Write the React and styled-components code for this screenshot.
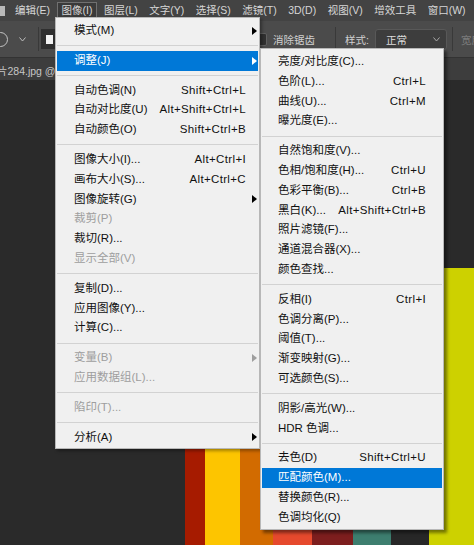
import React from 'react';
import styled, { createGlobalStyle } from 'styled-components';

const GlobalStyle = createGlobalStyle`
  html, body { margin: 0; padding: 0; background: #2a2a2a; }
  body { font-family: "Liberation Sans", "Noto Sans CJK SC", sans-serif; }
  * { box-sizing: border-box; }
`;

const Screen = styled.div`
  position: relative;
  width: 474px;
  height: 545px;
  overflow: hidden;
  display: flex;
  flex-direction: column;
  background: #2a2a2a;
`;

/* ---------- menu bar ---------- */
const MenuBar = styled.div`
  flex: none;
  height: 21px;
  display: flex;
  align-items: center;
  gap: 1.5px;
  background: #434343;
  font-size: 10.5px;
  color: #d6d6d6;
  white-space: nowrap;
`;

const AppLogo = styled.div`
  flex: none;
  width: 5px;
  height: 10px;
  margin-right: 3.5px;
  background: #b9b9b9;
`;

const BarItem = styled.div`
  flex: none;
  height: 17px;
  line-height: 15px;
  padding: 0 4px;
  border: 1px solid ${p => (p.$active ? '#707070' : 'transparent')};
  background: ${p => (p.$active ? '#3a3a3a' : 'transparent')};
`;

/* ---------- options bar ---------- */
const OptionsBar = styled.div`
  flex: none;
  height: 36px;
  display: flex;
  align-items: center;
  background: #4b4b4b;
  font-size: 10.5px;
  color: #cfcfcf;
  white-space: nowrap;
`;

const CircleTool = styled.div`
  flex: none;
  width: 15px;
  height: 15px;
  margin-left: -7px;
  border: 1.5px solid #c4c4c4;
  border-radius: 50%;
`;

const Chevron = styled.svg`
  flex: none;
  margin-left: ${p => p.$ml || 0}px;
`;

const Divider = styled.div`
  flex: none;
  width: 1px;
  height: 24px;
  margin-left: ${p => p.$ml}px;
  background: #393939;
`;

const Swatch = styled.div`
  flex: none;
  width: 16px;
  height: 20px;
  margin-left: 2px;
  background: #2f2f2f;
  display: flex;
  align-items: center;
  justify-content: center;
  &::after {
    content: '';
    width: 7px;
    height: 9px;
    background: #f2f2f2;
  }
`;

const CheckBox = styled.div`
  flex: none;
  width: 12px;
  height: 13px;
  margin-left: 198px;
  background: #303030;
  border: 1px solid #5f5f5f;
  border-radius: 2px;
`;

const OptLabel = styled.span`
  flex: none;
  margin-left: ${p => p.$ml}px;
  color: ${p => (p.$dim ? '#7c7c7c' : '#d0d0d0')};
`;

const Select = styled.div`
  flex: none;
  width: 72px;
  height: 21px;
  margin-left: 6px;
  padding: 0 6px 0 10px;
  display: flex;
  align-items: center;
  justify-content: space-between;
  background: #3d3d3d;
  border: 1px solid #585858;
  border-radius: 3px;
  color: #dcdcdc;
`;

/* ---------- document tab bar ---------- */
const TabBar = styled.div`
  flex: none;
  height: 23px;
  display: flex;
  align-items: center;
  background: #3d3d3d;
  border-top: 1px solid #333;
  font-size: 10.5px;
  color: #c6c6c6;
  white-space: nowrap;
  overflow: hidden;
`;

const TabLabel = styled.span`
  margin-left: -13.5px;
  padding-top: 2px;
`;

/* ---------- canvas ---------- */
const Canvas = styled.div`
  flex: 1;
  display: flex;
  padding: 188px 0 0 185px;
  background: #2a2a2a;
`;

const Photo = styled.div`
  flex: 1;
  display: flex;
`;

const Stripe = styled.div`
  flex: ${p => (p.$w ? `0 0 ${p.$w}px` : '1')};
  background: ${p => p.$c};
`;

/* ---------- menus ---------- */
const Menu = styled.div`
  position: absolute;
  top: ${p => p.$top}px;
  left: ${p => p.$left}px;
  width: ${p => p.$width}px;
  padding: 3px 1px 1px;
  background: #f0f0f0;
  border: 1px solid #b8b8b8;
  box-shadow: ${p => p.$shadow};
  font-size: 11.5px;
  color: #111;
  white-space: nowrap;
`;

const Row = styled.div`
  height: 19.8px;
  line-height: 19.8px;
  display: flex;
  align-items: center;
  padding-left: ${p => p.$pl}px;
  background: ${p => (p.$active ? '#0078d7' : 'transparent')};
  color: ${p => (p.$active ? '#ffffff' : p.$disabled ? '#9e9e9e' : '#111111')};
`;

const Label = styled.span`
  flex: 1;
`;

const Shortcut = styled.span`
  flex: none;
  letter-spacing: 0.35px;
`;

const TrailSlot = styled.span`
  flex: none;
  width: ${p => p.$w}px;
  height: 100%;
  display: flex;
  align-items: center;
  justify-content: flex-end;
  padding-right: 1px;
`;

const Separator = styled.div`
  height: 10px;
  display: flex;
  align-items: center;
  &::after {
    content: '';
    flex: 1;
    height: 1px;
    background: #d2d2d2;
  }
`;

const Arrow = ({ color }) => (
  <svg width="5" height="8" viewBox="0 0 5 8">
    <polygon points="0,0 5,4 0,8" fill={color} />
  </svg>
);

const mainItems = [
  { t: '模式(M)', arrow: true },
  'sep',
  { t: '调整(J)', arrow: true, active: true },
  'sep',
  { t: '自动色调(N)', k: 'Shift+Ctrl+L' },
  { t: '自动对比度(U)', k: 'Alt+Shift+Ctrl+L' },
  { t: '自动颜色(O)', k: 'Shift+Ctrl+B' },
  'sep',
  { t: '图像大小(I)...', k: 'Alt+Ctrl+I' },
  { t: '画布大小(S)...', k: 'Alt+Ctrl+C' },
  { t: '图像旋转(G)', arrow: true },
  { t: '裁剪(P)', dis: true },
  { t: '裁切(R)...' },
  { t: '显示全部(V)', dis: true },
  'sep',
  { t: '复制(D)...' },
  { t: '应用图像(Y)...' },
  { t: '计算(C)...' },
  'sep',
  { t: '变量(B)', dis: true, arrow: true },
  { t: '应用数据组(L)...', dis: true },
  'sep',
  { t: '陷印(T)...', dis: true },
  'sep',
  { t: '分析(A)', arrow: true },
];

const subItems = [
  { t: '亮度/对比度(C)...' },
  { t: '色阶(L)...', k: 'Ctrl+L' },
  { t: '曲线(U)...', k: 'Ctrl+M' },
  { t: '曝光度(E)...' },
  'sep',
  { t: '自然饱和度(V)...' },
  { t: '色相/饱和度(H)...', k: 'Ctrl+U' },
  { t: '色彩平衡(B)...', k: 'Ctrl+B' },
  { t: '黑白(K)...', k: 'Alt+Shift+Ctrl+B' },
  { t: '照片滤镜(F)...' },
  { t: '通道混合器(X)...' },
  { t: '颜色查找...' },
  'sep',
  { t: '反相(I)', k: 'Ctrl+I' },
  { t: '色调分离(P)...' },
  { t: '阈值(T)...' },
  { t: '渐变映射(G)...' },
  { t: '可选颜色(S)...' },
  'sep',
  { t: '阴影/高光(W)...' },
  { t: 'HDR 色调...' },
  'sep',
  { t: '去色(D)', k: 'Shift+Ctrl+U' },
  { t: '匹配颜色(M)...', active: true },
  { t: '替换颜色(R)...' },
  { t: '色调均化(Q)' },
];

const MenuList = ({ items, pl, trail }) =>
  items.map((it, i) =>
    it === 'sep' ? (
      <Separator key={i} />
    ) : (
      <Row key={i} $pl={pl} $active={it.active} $disabled={it.dis}>
        <Label>{it.t}</Label>
        {it.k && <Shortcut>{it.k}</Shortcut>}
        <TrailSlot $w={trail}>
          {it.arrow && (
            <Arrow color={it.active ? '#ffffff' : it.dis ? '#9e9e9e' : '#000000'} />
          )}
        </TrailSlot>
      </Row>
    )
  );

const barItems = ['编辑(E)', '图像(I)', '图层(L)', '文字(Y)', '选择(S)', '滤镜(T)', '3D(D)', '视图(V)', '增效工具', '窗口(W)'];

const stripes = [
  { w: 20, c: '#a61b00' },
  { w: 35, c: '#fdc500' },
  { w: 33, c: '#d26b00' },
  { w: 39, c: '#e6492d' },
  { w: 41, c: '#7d1e1e' },
  { w: 38, c: '#3d7e6f' },
  { w: 38, c: '#272727' },
  { c: '#cdd100' },
];

export default function App() {
  return (
    <>
      <GlobalStyle />
      <Screen>
        <MenuBar>
          <AppLogo />
          {barItems.map(b => (
            <BarItem key={b} $active={b === '图像(I)'}>{b}</BarItem>
          ))}
        </MenuBar>

        <OptionsBar>
          <CircleTool />
          <Chevron $ml={11} width="7" height="5" viewBox="0 0 7 5">
            <polyline points="0.5,0.5 3.5,4 6.5,0.5" fill="none" stroke="#bdbdbd" strokeWidth="1" />
          </Chevron>
          <Divider $ml={12} />
          <Swatch />
          <CheckBox />
          <OptLabel $ml={6}>消除锯齿</OptLabel>
          <Divider $ml={20} />
          <OptLabel $ml={9}>样式:</OptLabel>
          <Select>
            <span>正常</span>
            <svg width="7" height="5" viewBox="0 0 7 5">
              <polyline points="0.5,0.5 3.5,4 6.5,0.5" fill="none" stroke="#a8a8a8" strokeWidth="1" />
            </svg>
          </Select>
          <Divider $ml={5} />
          <OptLabel $ml={8} $dim>宽度:</OptLabel>
        </OptionsBar>

        <TabBar>
          <TabLabel>图片284.jpg @ 100%(RGB/8#)</TabLabel>
        </TabBar>

        <Canvas>
          <Photo>
            {stripes.map((s, i) => (
              <Stripe key={i} $w={s.w} $c={s.c} />
            ))}
          </Photo>
        </Canvas>

        <Menu $top={17} $left={55} $width={205} $shadow="2px 2px 3px rgba(0,0,0,0.35)">
          <MenuList items={mainItems} pl={17} trail={12} />
        </Menu>

        <Menu $top={48} $left={260} $width={184} $shadow="3px 3px 3px rgba(0,0,0,0.45)">
          <MenuList items={subItems} pl={16} trail={16} />
        </Menu>
      </Screen>
    </>
  );
}
